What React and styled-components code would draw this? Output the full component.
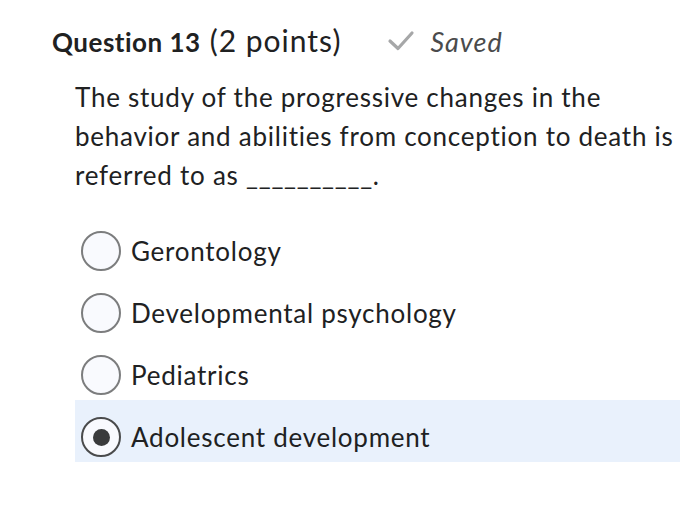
import React from 'react';
import styled, { createGlobalStyle } from 'styled-components';

const GlobalStyle = createGlobalStyle`
  body {
    margin: 0;
    background: #fff;
    font-family: Lato, "Open Sans", sans-serif;
    color: #202122;
    font-variant-ligatures: none;
  }
`;

const Page = styled.div`
  width: 700px;
  height: 509px;
  padding: 19px 0 0 52px;
  box-sizing: border-box;
`;

const Header = styled.div`
  display: flex;
  align-items: baseline;
  height: 42px;
  line-height: 42px;
`;

const Title = styled.h2`
  margin: 0;
  font-size: 26px;
  font-weight: 700;
  letter-spacing: 0.5px;
`;

const Points = styled.span`
  font-size: 30px;
  font-weight: 400;
  margin-left: 9px;
  letter-spacing: 1px;
`;

const Saved = styled.span`
  display: flex;
  align-items: center;
  margin-left: 46px;
  font-size: 27px;
  font-style: italic;
  letter-spacing: 1px;
  color: #4a4b4c;
  gap: 15px;
  svg {
    align-self: center;
    margin-top: -2px;
  }
`;

const Question = styled.p`
  margin: 17px 0 0 23px;
  font-size: 26px;
  letter-spacing: 0.75px;
  line-height: 39px;
  width: 605px;
`;

const Options = styled.div`
  margin: 19px 0 0 23px;
  width: 605px;
`;

const Option = styled.label`
  display: flex;
  align-items: center;
  box-sizing: border-box;
  height: 62px;
  padding: 12px 0 0 6px;
  gap: 10px;
  font-size: 26px;
  letter-spacing: 0.75px;
  background: ${p => (p.$selected ? '#e9f1fc' : 'transparent')};
`;

const Radio = styled.span`
  width: 40px;
  height: 40px;
  box-sizing: border-box;
  border-radius: 50%;
  border: 2px solid ${p => (p.$checked ? '#4a4b4c' : '#7c7d7e')};
  background: #f9fafe;
  display: flex;
  align-items: center;
  justify-content: center;
  flex-shrink: 0;

  &::after {
    content: '';
    width: 17px;
    height: 17px;
    border-radius: 50%;
    background: #3a3b3c;
    display: ${p => (p.$checked ? 'block' : 'none')};
  }
`;

const CheckIcon = () => (
  <svg width="28" height="22" viewBox="0 0 28 22">
    <path d="M3 11 L11 18.5 L25 3" fill="none" stroke="#a6a7a8" strokeWidth="3.2" strokeLinecap="round" strokeLinejoin="round" />
  </svg>
);

const choices = ['Gerontology', 'Developmental psychology', 'Pediatrics', 'Adolescent development'];

export default function App() {
  const selected = 3;
  return (
    <Page>
      <GlobalStyle />
      <Header>
        <Title>
          Question 13<Points>(2 points)</Points>
        </Title>
        <Saved>
          <CheckIcon />
          Saved
        </Saved>
      </Header>
      <Question>
        The study of the progressive changes in the behavior and abilities from conception to death is referred to as __________.
      </Question>
      <Options>
        {choices.map((c, i) => (
          <Option key={c} $selected={i === selected}>
            <Radio $checked={i === selected} />
            {c}
          </Option>
        ))}
      </Options>
    </Page>
  );
}
